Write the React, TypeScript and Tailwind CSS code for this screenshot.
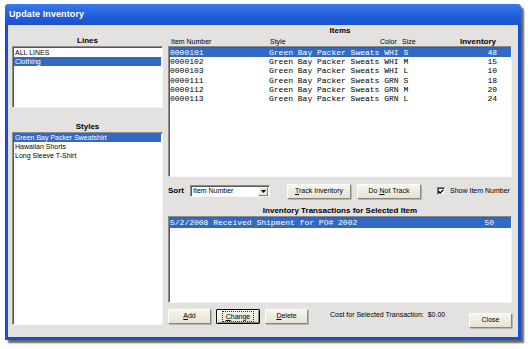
import React from 'react';

const items = [
  { num: '0000101', style: 'Green Bay Packer Sweats WHI S', qty: '48' },
  { num: '0000102', style: 'Green Bay Packer Sweats WHI M', qty: '15' },
  { num: '0000103', style: 'Green Bay Packer Sweats WHI L', qty: '10' },
  { num: '0000111', style: 'Green Bay Packer Sweats GRN S', qty: '18' },
  { num: '0000112', style: 'Green Bay Packer Sweats GRN M', qty: '20' },
  { num: '0000113', style: 'Green Bay Packer Sweats GRN L', qty: '24' },
];

const sunken =
  'bg-white border border-[#8c8c8c] border-b-[#f4f4f4] border-r-[#f4f4f4] shadow-[inset_1px_1px_0_#5a5a5a]';

function Btn({ children, w, def }: { children: React.ReactNode; w: string; def?: boolean }) {
  return (
    <div
      className={`${w} h-[15px] flex items-center justify-center text-[7px] text-black bg-gradient-to-b from-[#f6f5ee] to-[#e6e3d3] rounded-[1px] ${
        def
          ? 'border border-black shadow-[inset_1px_1px_0_#fff,inset_-1px_-1px_0_#8a887c]'
          : 'border border-[#fdfdfb] border-r-[#8a887c] border-b-[#8a887c] shadow-[1px_1px_0_#b8b6ac]'
      }`}
    >
      {def ? (
        <span className="border border-dotted border-[#333] px-[3px] leading-[9px]">{children}</span>
      ) : (
        <span className="whitespace-pre">{children}</span>
      )}
    </div>
  );
}

export default function App() {
  return (
    <div className="min-h-screen bg-white pt-[4px] pl-[5px] font-['Liberation_Sans',Arial,sans-serif]">
      <div className="w-[516px] h-[336px] bg-[#1c4fd0] rounded-t-[4px] shadow-[3px_3px_2px_rgba(0,0,0,0.6)] flex flex-col">
        {/* title bar */}
        <div className="h-[21px] flex items-center pl-[4px] rounded-t-[4px] bg-gradient-to-b from-[#3d7bea] via-[#2160dc] to-[#1c52cc]">
          <span className="text-white font-bold text-[9px] tracking-[0.1px]">Update Inventory</span>
        </div>

        <div className="flex-1 mx-[3px] mb-[3px] bg-[#e3e2e1] flex pl-[4px] gap-[5px]">
          {/* left column */}
          <div className="w-[151px] flex flex-col pt-[11px]">
            <div className="h-[10px] leading-[10px] text-center font-bold text-[8px]">Lines</div>
            <div className={`h-[62px] ${sunken} pt-[1px] px-[1px] text-[7px]`}>
              <div className="h-[9px] leading-[9px] pl-[1px]">ALL LINES</div>
              <div className="h-[9px] leading-[9px] pl-[1px] bg-[#316ac5] text-white">Clothing</div>
            </div>
            <div className="mt-[14px] h-[10px] leading-[10px] text-center font-bold text-[8px]">Styles</div>
            <div className={`h-[193px] ${sunken} px-[1px] text-[7px]`}>
              <div className="h-[9px] leading-[9px] pl-[1px] bg-[#316ac5] text-white">Green Bay Packer Sweatshirt</div>
              <div className="h-[8.7px] leading-[9px] pl-[1px]">Hawaiian Shorts</div>
              <div className="h-[8.7px] leading-[9px] pl-[1px]">Long Sleeve T-Shirt</div>
            </div>
          </div>

          {/* right column */}
          <div className="w-[344px] flex flex-col pt-[1px]">
            <div className="h-[10px] leading-[10px] text-center font-bold text-[8px]">Items</div>
            <div className="h-[10px] flex items-end pl-[3px] pr-[16px] text-[7px] leading-[9px]">
              <span className="w-[99px]">Item Number</span>
              <span className="w-[110px]">Style</span>
              <span className="w-[22px]">Color</span>
              <span className="flex-1">Size</span>
              <span className="font-bold text-[8px]">Inventory</span>
            </div>
            <div className={`h-[131px] ${sunken} pt-[1px] font-['Liberation_Mono','Courier_New',monospace] text-[8px]`}>
              {items.map((it, i) => (
                <div
                  key={it.num}
                  className={`h-[9.2px] leading-[9px] flex pl-[1px] pr-[14px] ${
                    i === 0 ? 'bg-[#316ac5] text-white' : 'text-black'
                  }`}
                >
                  <span className="w-[99px]">{it.num}</span>
                  <span className="flex-1 whitespace-pre">{it.style}</span>
                  <span>{it.qty}</span>
                </div>
              ))}
            </div>

            {/* sort row */}
            <div className="mt-[6px] h-[16px] flex items-center text-[7px]">
              <span className="w-[22px] font-bold text-[8px]">Sort</span>
              <div className={`w-[80px] h-[12px] ${sunken} flex items-center`}>
                <span className="flex-1 pl-[2px] leading-[10px]">Item Number</span>
                <div className="w-[10px] h-[9px] mr-[1px] bg-[#ece9d8] border border-white border-r-[#808080] border-b-[#808080] flex items-center justify-center">
                  <svg width="5" height="3" viewBox="0 0 5 3">
                    <path d="M0 0h5L2.5 3z" fill="#000" />
                  </svg>
                </div>
              </div>
              <div className="ml-[17px]">
                <Btn w="w-[64px]">
                  <span className="underline">T</span>rack Inventory
                </Btn>
              </div>
              <div className="ml-[6px]">
                <Btn w="w-[64px]">
                  {'Do '}<span className="underline">N</span>{'ot Track'}
                </Btn>
              </div>
              <div className="ml-[16px] w-[8px] h-[8px] bg-white border border-[#7a7a7a] border-b-[#e8e8e8] border-r-[#e8e8e8] shadow-[inset_1px_1px_0_#404040] flex items-center justify-center">
                <svg width="6" height="5" viewBox="0 0 6 5">
                  <path d="M0.5 2.2L2.2 4L5.5 0.6" stroke="#000" strokeWidth="1.3" fill="none" />
                </svg>
              </div>
              <span className="ml-[5px]">Show Item Number</span>
            </div>

            <div className="mt-[7px] h-[10px] leading-[10px] text-center font-bold text-[8px]">
              Inventory Transactions for Selected Item
            </div>
            <div className={`h-[87px] ${sunken} pt-[1px] font-['Liberation_Mono','Courier_New',monospace] text-[8px]`}>
              <div className="h-[10px] leading-[10px] flex pl-[1px] pr-[17px] bg-[#316ac5] text-white">
                <span className="flex-1 whitespace-pre">5/2/2008 Received Shipment for PO# 2002</span>
                <span>50</span>
              </div>
            </div>

            {/* bottom row */}
            <div className="mt-[6px] flex items-start text-[7px]">
              <Btn w="w-[43px]">
                <span className="underline">A</span>dd
              </Btn>
              <div className="ml-[5px]">
                <Btn w="w-[44px]" def>
                  <span className="underline">C</span>hange
                </Btn>
              </div>
              <div className="ml-[5px]">
                <Btn w="w-[43px]">
                  <span className="underline">D</span>elete
                </Btn>
              </div>
              <span className="ml-[22px] mt-[1px] leading-[10px] whitespace-pre">Cost for Selected Transaction:  $0.00</span>
              <div className="ml-auto mt-[4px]">
                <Btn w="w-[43px]">Close</Btn>
              </div>
            </div>
          </div>
        </div>
      </div>
    </div>
  );
}
